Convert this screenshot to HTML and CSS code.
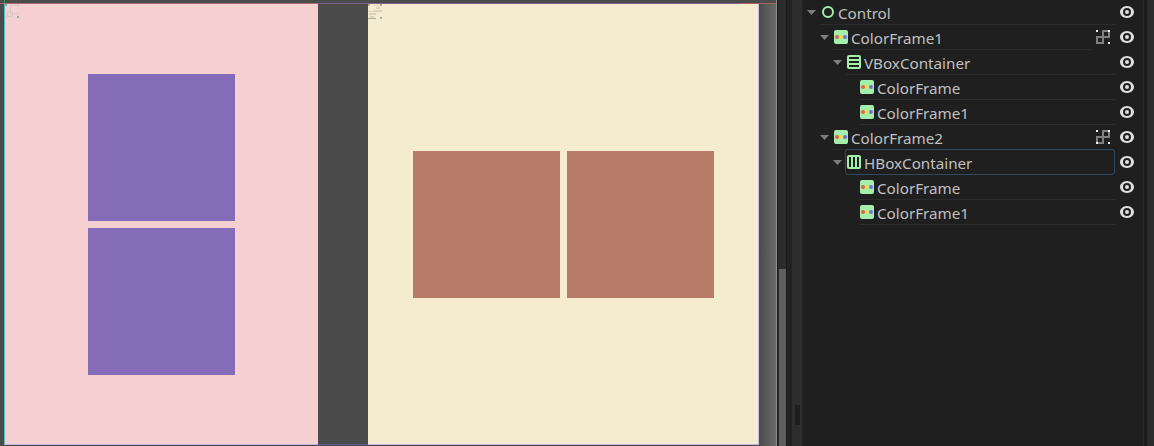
FILE: index.html
```html
<!DOCTYPE html>
<html lang="en">
<head>
<meta charset="utf-8">
<title>Scene tree</title>
<link rel="stylesheet" href="styles.css">
</head>
<body>
<svg class="defs" width="0" height="0" aria-hidden="true">
  <symbol id="arrow" viewBox="0 0 9 5"><path d="M0 0H9L4.5 5Z" fill="#7d7d7d"/></symbol>
  <symbol id="control" viewBox="0 0 14 14"><circle cx="7" cy="7" r="5" fill="none" stroke="#a5efac" stroke-width="2"/></symbol>
  <symbol id="frame" viewBox="0 0 14 14"><rect width="14" height="14" rx="2" fill="#a5efac"/><circle cx="3" cy="7" r="2" fill="#ef5a4a"/><circle cx="7" cy="7" r="2" fill="#e6e64a"/><circle cx="11" cy="7" r="2" fill="#6f6fe8"/></symbol>
  <symbol id="vbox" viewBox="0 0 14 14"><rect x="1" y="1" width="12" height="12" rx="1" fill="none" stroke="#a5efac" stroke-width="2"/><path d="M1 5H13M1 9H13" stroke="#a5efac" stroke-width="2"/></symbol>
  <symbol id="hbox" viewBox="0 0 14 14"><rect x="1" y="1" width="12" height="12" rx="1" fill="none" stroke="#a5efac" stroke-width="2"/><path d="M5 1V13M9 1V13" stroke="#a5efac" stroke-width="2"/></symbol>
  <symbol id="eye" viewBox="0 0 14 12"><path fill-rule="evenodd" fill="#e0e0e0" d="M7 0C11 0 14 3 14 6C14 9 11 12 7 12C3 12 0 9 0 6C0 3 3 0 7 0ZM7 2A4 4 0 1 0 7 10A4 4 0 1 0 7 2Z"/><circle cx="7" cy="6" r="2" fill="#e0e0e0"/></symbol>
  <symbol id="cfg" viewBox="0 0 14 14"><path d="M7 1H13V7H7ZM1 7H7V13H1Z" fill="none" stroke="#808080" stroke-width="2"/><path d="M0 0H2V2H0ZM12 0H14V2H12ZM12 12H14V14H12Z" fill="#eeeeee"/></symbol>
  <symbol id="cfg2" viewBox="0 0 14 14"><path d="M7 1H13V7H7ZM1 7H7V13H1Z" fill="none" stroke="#808080" stroke-width="2"/><path d="M0 0H2V2H0ZM12 0H14V2H12ZM0 12H2V14H0ZM12 12H14V14H12Z" fill="#eeeeee"/></symbol>
  <symbol id="gizmo-a" viewBox="0 0 15 15"><g fill="none" stroke="#dfc9c6" stroke-width="1"><rect x="5.5" y="1.5" width="8" height="8"/><rect x="2.5" y="7.5" width="5" height="5"/><rect x="0.5" y="0.5" width="13" height="13" stroke="#e6d2cf"/></g><path d="M0 0H2V2H0ZM12 12H14V14H12Z" fill="#a8a4a4"/><path d="M12 0H14V2H12ZM0 13H2V14H0Z" fill="#cfc6c6"/></symbol>
  <symbol id="gizmo-b" viewBox="0 0 15 15"><path d="M0 0H2V2H0ZM12 0H14V2H12ZM12 13H14V15H12ZM0 14H8V15H0Z" fill="#aeaca4"/><path d="M6 1H12V2H6ZM8 3H12V5H8ZM0 7H6V8H0ZM6 6H14V8H6ZM1 9H8V11H1ZM2 12H6V14H2Z" fill="#dcd4bc"/></symbol>
</svg>
<div class="app">
  <main class="viewport">
    <div class="viewport-top"></div>
    <div class="top-line"></div>
    <div class="stage">
      <div class="guide-left"></div>
      <section class="panel panel-pink">
        <svg class="gizmo"><use href="#gizmo-a"/></svg>
        <div class="box-v">
          <div class="swatch swatch-purple"></div>
          <div class="swatch swatch-purple"></div>
        </div>
      </section>
      <div class="gap-gray"></div>
      <section class="panel panel-cream">
        <svg class="gizmo"><use href="#gizmo-b"/></svg>
        <div class="box-h">
          <div class="swatch swatch-brown"></div>
          <div class="swatch swatch-brown"></div>
        </div>
      </section>
      <div class="stage-edge"></div>
    </div>
    <div class="bottom-line">
      <div class="bl-pink"></div>
      <div class="bl-gap"></div>
      <div class="bl-cream"></div>
      <div class="bl-rest"></div>
    </div>
    <div class="viewport-foot"></div>
  </main>
  <div class="scrollbar"><div class="scroll-grabber"></div></div>
  <div class="dock-gutter"><div class="gutter-band"><div class="gutter-handle"></div></div></div>
  <aside class="tree">
    <div class="row">
      <svg class="arrow"><use href="#arrow"/></svg>
      <div class="cell"><svg class="ico"><use href="#control"/></svg><span class="name">Control</span></div>
      <div class="cfg-slot cfg-border"></div>
      <div class="eye-slot"><svg class="eye"><use href="#eye"/></svg></div>
    </div>
    <div class="row lv1">
      <svg class="arrow"><use href="#arrow"/></svg>
      <div class="cell"><svg class="ico"><use href="#frame"/></svg><span class="name">ColorFrame1</span></div>
      <div class="cfg-slot"><svg class="cfg"><use href="#cfg"/></svg></div>
      <div class="eye-slot"><svg class="eye"><use href="#eye"/></svg></div>
    </div>
    <div class="row lv2">
      <svg class="arrow"><use href="#arrow"/></svg>
      <div class="cell"><svg class="ico"><use href="#vbox"/></svg><span class="name">VBoxContainer</span></div>
      <div class="cfg-slot cfg-border"></div>
      <div class="eye-slot"><svg class="eye"><use href="#eye"/></svg></div>
    </div>
    <div class="row lv3">
      <div class="arrow"></div>
      <div class="cell"><svg class="ico"><use href="#frame"/></svg><span class="name">ColorFrame</span></div>
      <div class="cfg-slot cfg-border"></div>
      <div class="eye-slot"><svg class="eye"><use href="#eye"/></svg></div>
    </div>
    <div class="row lv3">
      <div class="arrow"></div>
      <div class="cell"><svg class="ico"><use href="#frame"/></svg><span class="name">ColorFrame1</span></div>
      <div class="cfg-slot cfg-border"></div>
      <div class="eye-slot"><svg class="eye"><use href="#eye"/></svg></div>
    </div>
    <div class="row lv1">
      <svg class="arrow"><use href="#arrow"/></svg>
      <div class="cell"><svg class="ico"><use href="#frame"/></svg><span class="name">ColorFrame2</span></div>
      <div class="cfg-slot"><svg class="cfg"><use href="#cfg2"/></svg></div>
      <div class="eye-slot"><svg class="eye"><use href="#eye"/></svg></div>
    </div>
    <div class="row lv2 selected">
      <svg class="arrow"><use href="#arrow"/></svg>
      <div class="cell"><svg class="ico"><use href="#hbox"/></svg><span class="name">HBoxContainer</span></div>
      <div class="eye-slot"><svg class="eye"><use href="#eye"/></svg></div>
    </div>
    <div class="row lv3">
      <div class="arrow"></div>
      <div class="cell"><svg class="ico"><use href="#frame"/></svg><span class="name">ColorFrame</span></div>
      <div class="cfg-slot cfg-border"></div>
      <div class="eye-slot"><svg class="eye"><use href="#eye"/></svg></div>
    </div>
    <div class="row lv3">
      <div class="arrow"></div>
      <div class="cell"><svg class="ico"><use href="#frame"/></svg><span class="name">ColorFrame1</span></div>
      <div class="cfg-slot cfg-border"></div>
      <div class="eye-slot"><svg class="eye"><use href="#eye"/></svg></div>
    </div>
  </aside>
  <div class="dock-edge"></div>
</div>
</body>
</html>
```
FILE: styles.css
```css
* { box-sizing: border-box; }
html, body { margin: 0; padding: 0; height: 100%; overflow: hidden; background: #1f1f1f; }
.defs { position: absolute; }
.app { display: flex; width: 1154px; height: 446px; font-family: "Noto Sans", sans-serif; }

.viewport { width: 777px; display: flex; flex-direction: column; background: #4b4b4b; border-right: 1px solid #8c8c8c; }
.viewport-top { height: 3px; background: linear-gradient(90deg, #4b4b4b 0 4px, #3fa04f 4px 5px, #4b4b4b 5px); }
.top-line { height: 1px; background: linear-gradient(90deg, #a86a78 0 318px, #7f5f8c 318px 740px, #a86060 740px); }
.stage { height: 440px; display: flex; }
.guide-left { width: 5px; background: linear-gradient(90deg, #4b4b4b 0 4px, #45c4c0 4px); }
.panel { position: relative; display: flex; align-items: center; justify-content: center; padding-top: 1px; }
.panel-pink { width: 313px; background: #f6d0d1; }
.panel-cream { width: 390px; background: #f5ebcf; }
.gap-gray { width: 50px; background: #4b4b4b; }
.stage-edge { flex: 1; border-left: 1px solid #c9bedd; background: linear-gradient(90deg, #4b4b4b, #6a6a6a); }
.box-v { display: flex; flex-direction: column; gap: 7px; }
.box-h { display: flex; gap: 7px; }
.swatch { width: 147px; height: 147px; }
.swatch-purple { background: #856cb9; }
.swatch-brown { background: #b77d69; }
.gizmo { position: absolute; left: 0; top: 0; width: 15px; height: 15px; }

.bottom-line { height: 1px; display: flex; padding-left: 4px; background: #4b4b4b; }
.bl-pink { width: 314px; background: #c3b0e6; }
.bl-gap { width: 50px; background: #5d58a2; }
.bl-cream { width: 391px; background: #c3b0e6; }
.bl-rest { flex: 1; background: linear-gradient(90deg, #4b4b4b, #6a6a6a); }
.viewport-foot { flex: 1; background: linear-gradient(90deg, #4b4b4b 0 759px, #6a6a6a 776px); }

.scrollbar { width: 9px; padding: 269px 0 0 1px; background: #2b2b2b; border-left: 1px solid #1e1e1e; }
.scroll-grabber { height: 100%; background: #5f5f5f; }

.dock-gutter { width: 17px; padding: 0 2px 0 5px; background: #222222; border-left: 1px solid #1b1b1b; display: flex; }
.gutter-band { flex: 1; padding: 405px 2px 0 3px; background: #2d2d2d; }
.gutter-handle { width: 5px; height: 20px; background: #1e1e1e; }

.tree { width: 340px; padding-left: 4px; padding-right: 4px; background: #1f1f1f; }
.row { display: flex; align-items: center; height: 25px; color: #c0c0c0; }
.lv1 { margin-left: 13px; }
.lv2 { margin-left: 26px; }
.lv3 { margin-left: 39px; }
.arrow { width: 9px; height: 5px; flex: none; margin-right: 4px; }
.cell { flex: 1; min-width: 0; height: 25px; display: flex; align-items: center; gap: 3px; padding: 1px 0 0 1px; border-bottom: 1px solid #2b2b2b; }
.ico { width: 14px; height: 14px; flex: none; margin-top: -1px; }
.name { font-size: 15.2px; line-height: 24px; white-space: nowrap; }
.selected .cell { border: 1px solid #2f4a60; border-radius: 3px; margin-left: -1px; padding-left: 1px; height: 26px; margin-top: -1px; }
.cfg-slot { width: 24px; height: 25px; flex: none; padding: 0 0 1px 5px; display: flex; align-items: center; }
.cfg-border { border-bottom: 1px solid #2b2b2b; }
.cfg { width: 14px; height: 14px; }
.eye-slot { width: 24px; flex: none; display: flex; justify-content: center; margin-bottom: 1px; }
.eye { width: 14px; height: 12px; display: block; }

.dock-edge { flex: 1; background: linear-gradient(90deg, #2a2a2a 0 1px, #1b1b1b 1px 4px, #2b2b2b 4px); }
```
